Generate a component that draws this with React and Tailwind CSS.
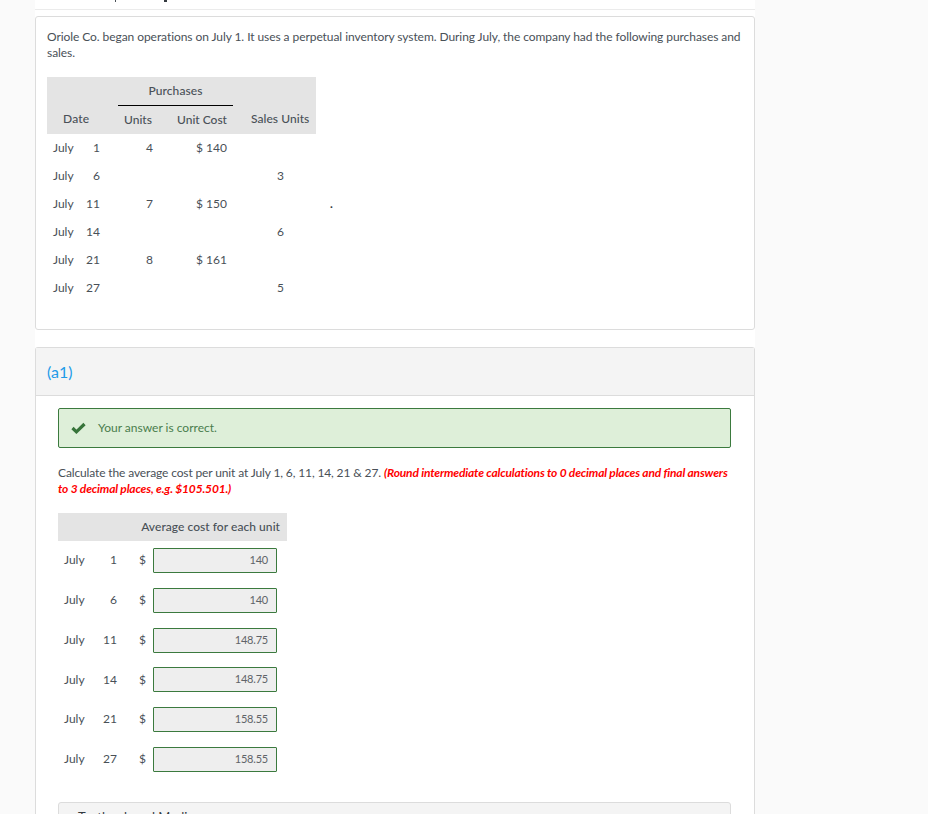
import React from 'react';

const purchases = [
  { month: 'July', day: '1', units: '4', cost: '$ 140', sales: '' },
  { month: 'July', day: '6', units: '', cost: '', sales: '3' },
  { month: 'July', day: '11', units: '7', cost: '$ 150', sales: '' },
  { month: 'July', day: '14', units: '', cost: '', sales: '6' },
  { month: 'July', day: '21', units: '8', cost: '$ 161', sales: '' },
  { month: 'July', day: '27', units: '', cost: '', sales: '5' },
];

const averages = [
  { day: '1', value: '140' },
  { day: '6', value: '140' },
  { day: '11', value: '148.75' },
  { day: '14', value: '148.75' },
  { day: '21', value: '158.55' },
  { day: '27', value: '158.55' },
];

const App = () => {
  return (
    <div className="h-[814px] overflow-hidden bg-[#fafafa] font-['Lato',sans-serif] text-[12px] text-[#495057]">
      <div className="ml-[35px] w-[720px] h-[814px] bg-white overflow-hidden">
        {/* cut off heading + rule */}
        <div className="h-[10px] border-b border-[#ebebeb] flex items-start">
          <span className="ml-[80px] h-[2px] w-[1px] bg-[#495057]" />
          <span className="ml-[48px] h-[2px] w-[3px] bg-[#343a40]" />
        </div>

        {/* problem card */}
        <div className="mt-[6px] h-[314px] rounded-[3px] border border-[#dcdcdc] pl-[11px] pr-[11px] pt-[12px]">
          <p className="w-[700px] leading-[16px] tracking-[-0.07px]">
            Oriole Co. began operations on July 1. It uses a perpetual inventory system. During July, the company had the following purchases and sales.
          </p>
          <div className="mt-[16px] w-[269px]">
            <div className="bg-[#e4e4e4] h-[57px] grid grid-cols-[71px_115px_83px] grid-rows-[29px_28px]">
              <div />
              <div className="border-b border-black text-center leading-[27px] font-medium tracking-[0.1px]">Purchases</div>
              <div />
              <div className="pl-[16px] leading-[25px] font-medium tracking-[0.2px]">Date</div>
              <div className="flex font-medium leading-[28px]">
                <span className="w-[42px] pl-[6px]">Units</span>
                <span className="pl-[17px]">Unit Cost</span>
              </div>
              <div className="pl-[18px] leading-[25px] font-medium whitespace-nowrap tracking-[0.05px]">Sales Units</div>
            </div>
            {purchases.map((row) => (
              <div key={row.day} className="h-[28px] w-[320px] flex items-center whitespace-nowrap">
                <span className="w-[37px] pl-[6px]">{row.month}</span>
                <span className="w-[16px] text-right">{row.day}</span>
                <span className="w-[53px] text-right">{row.units}</span>
                <span className="w-[74px] text-right">{row.cost}</span>
                <span className="w-[57px] text-right">{row.sales}</span>
                {row.day === '11' && <span className="ml-[46px] font-bold text-[#343a40]">.</span>}
              </div>
            ))}
          </div>
        </div>

        {/* part a1 */}
        <div className="mt-[17px] rounded-t-[3px] border border-[#dcdcdc] border-b-0 h-[520px]">
          <div className="h-[48px] bg-[#f4f4f4] border-b border-[#dcdcdc] pl-[11px] text-[16px] leading-[47px] text-[#1e9be8]">(a1)</div>
          <div className="pl-[22px] pr-[23px] pt-[12px]">
            <div className="h-[40px] rounded-[2px] border border-[#3b7a3e] bg-[#deefd9] flex items-center pl-[12px] text-[#4a7d4d]">
              <svg width="15" height="12" viewBox="0 0 15 12" className="shrink-0">
                <path d="M1.5 6 L5.4 9.8 L13.5 2" fill="none" stroke="#37743a" strokeWidth="3.2" />
              </svg>
              <span className="ml-[12px]">Your answer is correct.</span>
            </div>

            <p className="mt-[17px] leading-[16px] w-[672px]">
              <span className="tracking-[-0.13px]">Calculate the average cost per unit at July 1, 6, 11, 14, 21 &amp; 27.</span>{' '}
              <span className="font-bold italic text-[#ff0000] tracking-[-0.18px]">
                (Round intermediate calculations to 0 decimal places and final answers to 3 decimal places, e.g. $105.501.)
              </span>
            </p>

            <div className="mt-[16px] w-[229px]">
              <div className="h-[28px] bg-[#e4e4e4] pr-[7px] text-right leading-[28px] font-medium tracking-[0.05px]">Average cost for each unit</div>
              <div className="mt-[7px] flex flex-col gap-[14.8px]">
                {averages.map((row) => (
                  <div key={row.day} className="h-[25px] flex items-center">
                    <span className="w-[40px] pl-[6px] pb-[0.6px]">July</span>
                    <span className="w-[19px] text-right pb-[0.6px]">{row.day}</span>
                    <span className="w-[36px] pl-[22px] pb-[0.6px]">$</span>
                    <div className="w-[124px] h-[25px] rounded-[1px] border border-[#3b7a3e] bg-[#eeeeee] pr-[8px] text-right text-[11px] tracking-[-0.2px] leading-[21px] text-[#5f6469]">
                      {row.value}
                    </div>
                  </div>
                ))}
              </div>
            </div>

            <div className="mt-[30px] h-[30px] rounded-t-[3px] border border-[#dcdcdc] bg-[#f4f4f4] pl-[19px] pt-[4px] text-[13px] leading-[20px] text-[#343a40]">
              Textbook and Media
            </div>
          </div>
        </div>
      </div>
    </div>
  );
};

export default App;
